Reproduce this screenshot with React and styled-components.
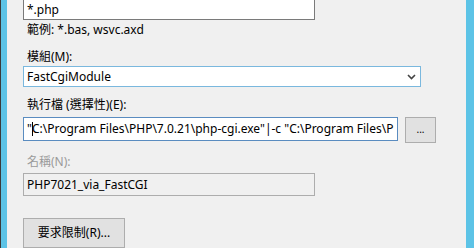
import React from "react";
import styled, { createGlobalStyle } from "styled-components";

const GlobalStyle = createGlobalStyle`
  html, body {
    margin: 0;
    padding: 0;
    width: 474px;
    height: 248px;
    overflow: hidden;
    background: #f0f0f0;
  }
  body {
    font-family: "Noto Sans", "Noto Sans CJK TC", sans-serif;
    font-size: 12px;
    color: #000;
  }
`;

const Frame = styled.div`
  display: flex;
  width: 474px;
  height: 248px;
  overflow: hidden;
`;

const LeftEdge = styled.div`
  width: 6px;
  flex: none;
  background: #5cc3e6;
  border-left: 1px solid #3a3a3a;
`;

const RightEdge = styled.div`
  width: 8px;
  flex: none;
  background: #5cc3e6;
`;

const Panel = styled.div`
  flex: 1;
  display: flex;
  flex-direction: column;
  align-items: flex-start;
  padding-left: 16px;
  background: #f0f0f0;
`;

const TextBox = styled.div`
  box-sizing: border-box;
  width: ${(p) => p.$width}px;
  height: ${(p) => p.$height || 24}px;
  margin-top: ${(p) => p.$top || 0}px;
  padding: 0 3px;
  display: flex;
  align-items: center;
  white-space: nowrap;
  overflow: hidden;
  background: ${(p) => (p.$disabled ? "#f0f0f0" : "#fff")};
  border: 1px solid ${(p) => p.$border || "#7a7a7a"};
  line-height: 16px;
`;

const Label = styled.div`
  margin-top: ${(p) => p.$top || 0}px;
  padding-left: 4px;
  line-height: 16px;
  color: ${(p) => (p.$disabled ? "#9a9a9a" : "#000")};
`;

const Chevron = styled.svg`
  margin-left: auto;
  margin-right: 1px;
  flex: none;
`;

const Row = styled.div`
  display: flex;
  align-items: flex-start;
  gap: 7px;
  margin-top: ${(p) => p.$top || 0}px;
`;

const Caret = styled.span`
  display: inline-block;
  width: 1px;
  height: 14px;
  background: #000;
  vertical-align: middle;
  margin: 0 -1px 0 0;
`;

const Button = styled.div`
  box-sizing: border-box;
  width: ${(p) => p.$width}px;
  height: ${(p) => p.$height}px;
  margin-top: ${(p) => p.$top || 0}px;
  display: flex;
  align-items: ${(p) => (p.$dots ? "flex-end" : "center")};
  justify-content: center;
  padding-bottom: ${(p) => (p.$dots ? 5 : 0)}px;
  background: #e1e1e1;
  border: 1px solid #adadad;
  line-height: 16px;
  font-size: ${(p) => (p.$dots ? 10 : 12)}px;
  flex: none;
`;

export default function App() {
  return (
    <>
      <GlobalStyle />
      <Frame>
        <LeftEdge />
        <Panel>
          <TextBox $width={292} $top={-1}>*.php</TextBox>
          <Label $top={2}>範例: *.bas, wsvc.axd</Label>
          <Label $top={11}>模組(M):</Label>
          <TextBox $width={398} $height={24} $top={1} $border="#7ab8de">
            FastCgiModule
            <Chevron width="9" height="6" viewBox="0 0 9 6">
              <path d="M1 1 L4.5 4.5 L8 1" fill="none" stroke="#444" strokeWidth="1.6" />
            </Chevron>
          </TextBox>
          <Label $top={10}>執行檔 (選擇性)(E):</Label>
          <Row $top={4}>
            <TextBox $width={375} $height={24} $border="#5a8cc0">
              "<Caret />C:\Program Files\PHP\7.0.21\php-cgi.exe"|-c "C:\Program Files\P
            </TextBox>
            <Button $width={31} $height={26} $dots>...</Button>
          </Row>
          <Label $top={11} $disabled>名稱(N):</Label>
          <TextBox $width={292} $height={26} $top={3} $disabled $border="#adadad">
            PHP7021_via_FastCGI
          </TextBox>
          <Button $width={102} $height={30} $top={22}>要求限制(R)...</Button>
        </Panel>
        <RightEdge />
      </Frame>
    </>
  );
}
